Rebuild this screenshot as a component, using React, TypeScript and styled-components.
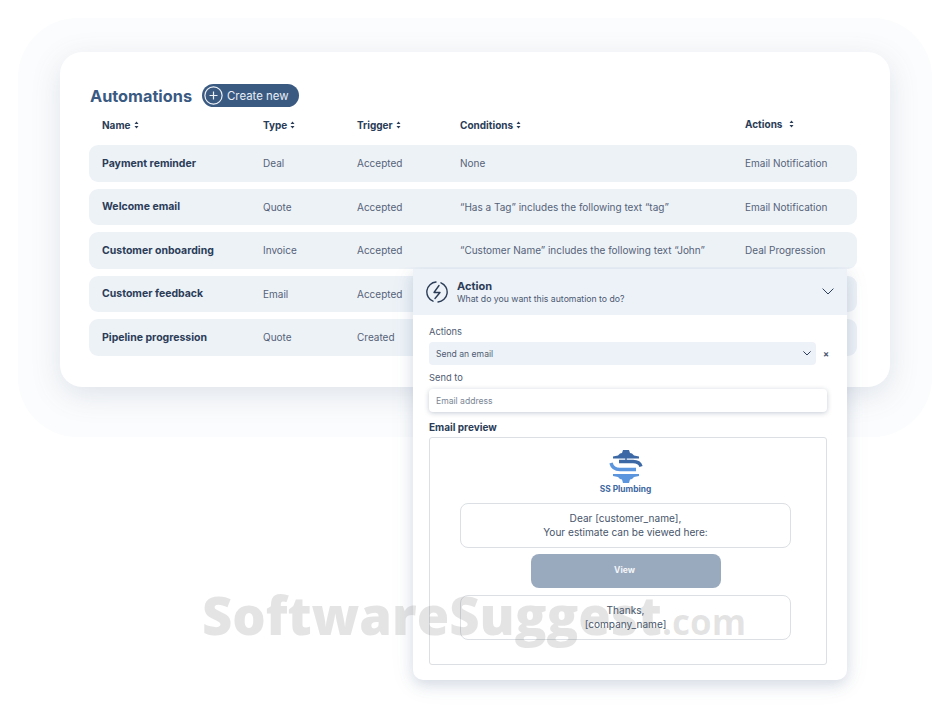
import React, { FC } from "react";
import styled, { createGlobalStyle } from "styled-components";

const GlobalStyle = createGlobalStyle`
	html, body {
		margin: 0;
		padding: 0;
		background: #fff;
	}
	body {
		font-family: "Inter", "Open Sans", sans-serif;
		color: #2b3c57;
	}
`;

const Page = styled.div`
	position: relative;
	width: 950px;
	height: 714px;
	padding: 52px 60px 0;
	box-sizing: border-box;
	overflow: hidden;
`;

const Card = styled.section`
	width: 830px;
	height: 335px;
	box-sizing: border-box;
	padding: 32px 33px 0 29px;
	background: #fff;
	border-radius: 22px;
	box-shadow: 0 8px 30px rgba(74, 101, 138, 0.16), 0 8px 0 42px #fbfcfd;
`;

const TitleRow = styled.div`
	display: flex;
	align-items: center;
	gap: 10px;
	height: 23px;
	padding-left: 1px;
`;

const Title = styled.h1`
	margin: 0;
	font-size: 16.3px;
	font-weight: 700;
	color: #3a5a82;
`;

const CreateButton = styled.button`
	display: flex;
	align-items: center;
	gap: 4px;
	height: 23px;
	width: 97px;
	padding: 0 0 0 2px;
	border: none;
	border-radius: 12px;
	background: #3a5a82;
	color: #e8eef5;
	font: 400 11.4px "Inter", sans-serif;
`;

const Columns = styled.div`
	display: grid;
	grid-template-columns: 161px 94px 103px 285px 1fr;
	padding-left: 13px;
	align-items: center;
`;

const HeadRow = styled(Columns)`
	height: 36px;
	margin-bottom: 2px;
`;

const HeadCell = styled.div<{ $wide?: boolean }>`
	display: flex;
	align-items: center;
	gap: ${({ $wide }) => ($wide ? "7px" : "3px")};
	margin-top: ${({ $wide }) => ($wide ? "-2px" : "0")};
	font-size: 10px;
	font-weight: 700;
	color: #2b3c57;
`;

const Rows = styled.div`
	display: flex;
	flex-direction: column;
	gap: 7px;
`;

const Row = styled(Columns)`
	height: 36.5px;
	border-radius: 9px;
	background: #edf2f7;
	font-size: 10px;
	color: #556277;
`;

const NameCell = styled.div`
	font-size: 10.5px;
	font-weight: 700;
	color: #2b3c57;
`;

const Panel = styled.aside`
	position: absolute;
	left: 413px;
	top: 269px;
	width: 434px;
	height: 411px;
	box-sizing: border-box;
	background: #fff;
	border-radius: 0 0 10px 10px;
	box-shadow: 0 5px 14px rgba(74, 101, 138, 0.18), 0 4px 26px rgba(74, 101, 138, 0.08);
	clip-path: inset(-2px -30px -30px -30px);
`;

const PanelHeader = styled.header`
	display: flex;
	align-items: center;
	height: 46px;
	padding: 0 13px;
	background: #edf2f8;
`;

const HeaderText = styled.div`
	flex: 1;
	margin-left: 9px;
`;

const HeaderTitle = styled.div`
	font-size: 11px;
	font-weight: 700;
	line-height: 13px;
	color: #2b3c57;
`;

const HeaderSub = styled.div`
	font-size: 8.7px;
	line-height: 12px;
	color: #4a5870;
`;

const PanelBody = styled.div`
	padding: 11px 20px 0 16px;
`;

const Label = styled.div`
	font-size: 9.3px;
	line-height: 12px;
	color: #4f5c72;
`;

const SelectRow = styled.div`
	display: flex;
	align-items: center;
	gap: 7px;
	margin: 4px 0 7px;
`;

const Select = styled.div`
	display: flex;
	flex: none;
	align-items: center;
	justify-content: space-between;
	width: 387px;
	height: 23px;
	padding: 0 5px 0 7px;
	box-sizing: border-box;
	border-radius: 4px;
	background: #edf2f8;
	font-size: 8.6px;
	color: #4f5c72;
`;

const Clear = styled.span`
	font-size: 9px;
	line-height: 1;
	font-weight: 700;
	color: #4f5c72;
`;

const Input = styled.div`
	display: flex;
	align-items: center;
	height: 23px;
	margin-top: 5px;
	padding-left: 7px;
	border-radius: 4px;
	background: #fff;
	box-shadow: 0 1px 5px rgba(60, 80, 110, 0.3);
	font-size: 8.6px;
	color: #7b8696;
`;

const PreviewTitle = styled.div`
	margin-top: 9px;
	font-size: 10px;
	font-weight: 700;
	line-height: 12px;
	color: #2b3c57;
`;

const Preview = styled.div`
	display: flex;
	flex-direction: column;
	align-items: center;
	height: 228px;
	margin-top: 4px;
	padding: 10px 5px 0 0;
	box-sizing: border-box;
	border: 1px solid #dcdfe3;
	border-radius: 3px;
`;

const Logo = styled.div`
	display: flex;
	flex-direction: column;
	align-items: center;
	height: 55px;
	font-size: 8.4px;
	font-weight: 700;
	color: #41699f;
`;

const Bubble = styled.div`
	display: flex;
	flex-direction: column;
	align-items: center;
	justify-content: center;
	width: 331px;
	height: 45px;
	padding-bottom: 1px;
	box-sizing: border-box;
	border: 1px solid #dcdfe3;
	border-radius: 8px;
	font-size: 10.1px;
	line-height: 14px;
	color: #47556b;
`;

const ViewButton = styled.div`
	display: flex;
	align-items: center;
	justify-content: center;
	width: 190px;
	height: 34px;
	margin: 6px 0 7px;
	padding: 0 2px 3px 0;
	box-sizing: border-box;
	border-radius: 8px;
	background: #9aaabe;
	color: #f4f6f9;
	font-size: 8.5px;
	font-weight: 700;
`;

const Watermark = styled.div`
	position: absolute;
	left: 202px;
	top: 580px;
	font-family: "Open Sans", sans-serif;
	font-size: 52.5px;
	line-height: 70px;
	font-weight: 800;
	color: rgba(110, 110, 110, 0.19);
	white-space: nowrap;
	pointer-events: none;
`;

const WatermarkTld = styled.span`
	font-size: 35px;
	font-weight: 700;
`;

const SortIcon: FC = () => (
	<svg width="5" height="8" viewBox="0 0 5 8" fill="#2b3c57">
		<path d="M2.5 .5 4.5 3h-4zM2.5 7.5 .5 5h4z" />
	</svg>
);

const PlusCircle: FC = () => (
	<svg width="19" height="19" viewBox="0 0 19 19" fill="none" stroke="#eef2f7" strokeWidth="1.2">
		<circle cx="9.5" cy="9.5" r="8.6" />
		<path d="M9.5 5.5v8M5.5 9.5h8" />
	</svg>
);

const BoltCircle: FC = () => (
	<svg width="22" height="22" viewBox="0 0 22 22" fill="none" stroke="#2b3c57" strokeWidth="1.4" strokeLinejoin="round" strokeLinecap="round">
		<path d="M10 1A10 10 0 0 0 7 20.2M12 21A10 10 0 0 0 15 1.8" />
		<path d="M13 4.5 8 11.5h6L9 17.5" />
	</svg>
);

const Chevron: FC<{ size: number }> = ({ size }) => (
	<svg width={size} height={size * 0.6} viewBox="0 0 10 6" fill="none" stroke="#2b3c57" strokeWidth={10 / size}>
		<path d="M.5.5 5 5 9.5.5" />
	</svg>
);

const PlumbingMark: FC = () => (
	<svg width="36" height="36" viewBox="0 0 36 36" fill="none">
		<path d="M5 8.5l5-1 2-2 2-.5 1-3h6l1 3 2 .5 2 2 5 1v2H5z" fill="#3c68a6" />
		<path d="M11 13.5h14c4 0 7 1.5 8 5" stroke="#3c68a6" strokeWidth="3.4" />
		<path d="M18 10v3" stroke="#3c68a6" strokeWidth="1.5" />
		<path d="M3 15c1 4 4 6.500 9 6.500h16" stroke="#5b95dd" strokeWidth="3.400" />
		<path d="M5 26h26v2l-5 1-2 2-2 .5-1 3.500h-6l-1-3.500-2-.5-2-2-5-1z" fill="#5b95dd" />
	</svg>
);

const HEADERS = ["Name", "Type", "Trigger", "Conditions", "Actions"];

const ROWS = [
	["Payment reminder", "Deal", "Accepted", "None", "Email Notification"],
	["Welcome email", "Quote", "Accepted", "“Has a Tag” includes the following text “tag”", "Email Notification"],
	["Customer onboarding", "Invoice", "Accepted", "“Customer Name” includes the following text “John”", "Deal Progression"],
	["Customer feedback", "Email", "Accepted", "", ""],
	["Pipeline progression", "Quote", "Created", "", ""],
];

export default function App() {
	return (
		<Page>
			<GlobalStyle />
			<Card>
				<TitleRow>
					<Title>Automations</Title>
					<CreateButton>
						<PlusCircle />
						Create new
					</CreateButton>
				</TitleRow>
				<HeadRow>
					{HEADERS.map((h) => (
						<HeadCell key={h} $wide={h === "Actions"}>
							{h}
							<SortIcon />
						</HeadCell>
					))}
				</HeadRow>
				<Rows>
					{ROWS.map((r) => (
						<Row key={r[0]}>
							<NameCell>{r[0]}</NameCell>
							<div>{r[1]}</div>
							<div>{r[2]}</div>
							<div>{r[3]}</div>
							<div>{r[4]}</div>
						</Row>
					))}
				</Rows>
			</Card>
			<Panel>
				<PanelHeader>
					<BoltCircle />
					<HeaderText>
						<HeaderTitle>Action</HeaderTitle>
						<HeaderSub>What do you want this automation to do?</HeaderSub>
					</HeaderText>
					<Chevron size={12} />
				</PanelHeader>
				<PanelBody>
					<Label>Actions</Label>
					<SelectRow>
						<Select>
							Send an email
							<Chevron size={8} />
						</Select>
						<Clear>×</Clear>
					</SelectRow>
					<Label>Send to</Label>
					<Input>Email address</Input>
					<PreviewTitle>Email preview</PreviewTitle>
					<Preview>
						<Logo>
							<PlumbingMark />
							SS Plumbing
						</Logo>
						<Bubble>
							<span>Dear [customer_name],</span>
							<span>Your estimate can be viewed here:</span>
						</Bubble>
						<ViewButton>View</ViewButton>
						<Bubble>
							<span>Thanks,</span>
							<span>[company_name]</span>
						</Bubble>
					</Preview>
				</PanelBody>
			</Panel>
			<Watermark>
				SoftwareSuggest<WatermarkTld>.com</WatermarkTld>
			</Watermark>
		</Page>
	);
}
